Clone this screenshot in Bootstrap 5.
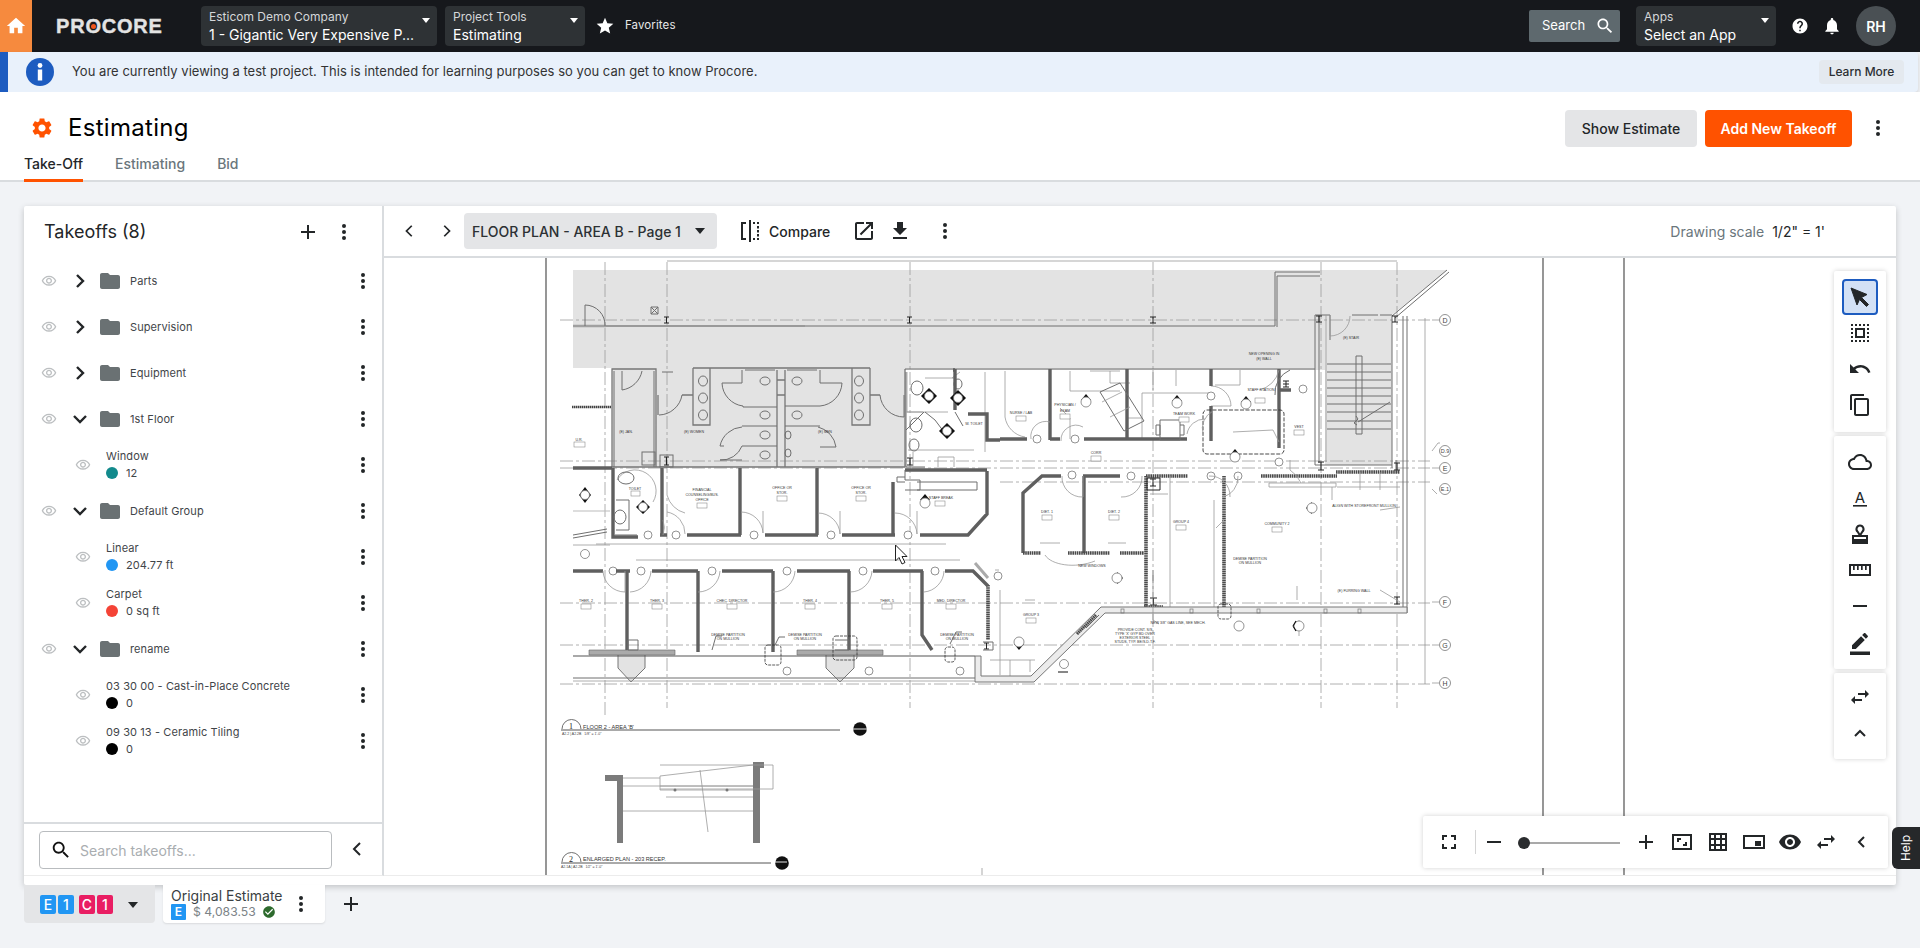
<!DOCTYPE html>
<html lang="en">
<head>
<meta charset="utf-8">
<title>Estimating</title>
<link href="https://cdn.jsdelivr.net/npm/bootstrap@5.3.0/dist/css/bootstrap.min.css" rel="stylesheet">
<style>
html,body{height:948px;overflow:hidden}
body{background:#f1f3f6;font-family:Inter,"Liberation Sans",sans-serif;color:#232628;font-size:14px;position:relative}
svg{display:block;flex:none}
.ic{width:24px;height:24px;fill:currentColor}
.sk{fill:none;stroke:currentColor;stroke-width:2}
.topbar{height:52px;background:#16181c;color:#fff}
.homebox{width:32px;height:52px;background:#f68a3e}
.logo{font:700 20px/24px "Liberation Sans",sans-serif;letter-spacing:.8px;color:#e3e3e3;-webkit-text-stroke:.4px #e3e3e3;margin:0 39px 0 24px;width:106px;white-space:nowrap}
.logo i{font-style:normal;position:relative;display:inline-block}
.logo i::after{content:"";position:absolute;left:5.5px;top:9.5px;width:5px;height:5px;border-radius:50%;background:#f0561c}
.sel{height:40px;background:#2e3235;border-radius:4px;padding:3px 8px;position:relative;line-height:1.2}
.sel .t1{font-size:12px;color:#d5d7d9;line-height:16px}
.sel .t2{font-size:14px;color:#fff;line-height:20px;white-space:nowrap}
.sel .cr{position:absolute;right:7px;top:12px;width:0;height:0;border:4px solid transparent;border-top:5px solid #fff;border-bottom:0}
.favs{font-size:12px;color:#e8e8e8;margin-left:9px}
.srch{width:91px;height:32px;background:#5e696e;border-radius:2px;color:#fff;font-size:13px;padding-left:13px;margin-right:16px}
.avat{width:40px;height:40px;border-radius:50%;background:#4a5054;color:#fff;font-size:14px;font-weight:600;margin:0 24px 0 14px}
.banner{height:40px;margin-right:2px;background:#e9f1fb;border-left:8px solid #1d5cc0;border-radius:0 4px 4px 0;box-shadow:0 2px 4px rgba(0,0,0,.14);padding:0 14px 0 18px;position:relative;color:#333;font-size:13px;letter-spacing:.03px}
.learn{width:85px;height:24px;background:#e4e9ef;border:0;border-radius:4px;font-size:12px;font-weight:500;color:#2b2f33;padding:0}
.titlesec{height:90px;background:#fff;border-bottom:2px solid #d9dcdf;position:relative}
.ttl{font-size:24px;line-height:30px;font-weight:400;margin:0;letter-spacing:.3px;color:#000}
.tab1{font-size:14px;color:#6a767c;font-weight:500;margin-right:32px;padding-bottom:6px;height:29px;display:block;text-decoration:none}
.tab1.on{color:#232628;border-bottom:3px solid #ff5200}
.bgrey{width:132px;height:37px;background:#e4e5e7;border:0;border-radius:4px;font-weight:500;font-size:14px;color:#232628;padding:0}
.borange{width:147px;height:37px;background:#ff5200;border:0;border-radius:4px;font-weight:600;font-size:14px;color:#fff;padding:0}
.shell{margin:24px 0 0 24px;width:1872px;height:679px;background:#fff;box-shadow:0 2px 6px rgba(0,0,0,.2);border-radius:2px;padding-bottom:9px}
.leftp{width:360px;border-right:2px solid #d9dcdf;border-bottom:1px solid #ececec}
.lhead{height:52px;padding:0 26px 0 20px}
.lhead h2{font-size:18px;font-weight:400;margin:0;line-height:52px}
.trow{height:46px;border:0;padding:0;background:transparent;color:#3f4549;font-size:11px;letter-spacing:.1px}
.trow .eye{color:#bcbfc1;width:16px;height:16px;fill:currentColor}
.trow .kb{width:24px;height:24px;margin-left:auto;margin-right:7px;fill:#232628}
.fd{width:20px;height:16px;fill:#6a7173}
.cv{width:16px;height:16px;fill:none;stroke:#232628;stroke-width:2.4}
.gp1{padding-left:17px}
.gp2{padding-left:51px}
.lab2{line-height:17px}
.dot{width:12px;height:12px;border-radius:50%;display:inline-block;margin-right:8px;vertical-align:-2px}
.lsearch{height:53px;border-top:2px solid #d9dcdf;padding:7px 0 0 15px}
.sbox{width:293px;height:38px;border:1px solid #b9bcbf;border-radius:4px;padding-left:10px;color:#a9adb0;font-size:14px;background:#fff}
.vbar{height:52px;border-bottom:2px solid #d9dcdf;padding-left:19px;color:#232628;flex:none}
.pagesel{width:253px;height:36px;background:#e4e5e7;border-radius:4px;padding:0 8px;position:relative;margin-left:11px;font-weight:500;white-space:nowrap;color:#2c3134}
.pagesel b{position:absolute;right:12px;top:15px;border:5px solid transparent;border-top:6px solid #232628;border-bottom:0}
.vport{height:618px;position:relative;overflow:hidden;background:#fff;border-bottom:1px solid #ececec}
.dl{fill:none;stroke:#8a8a8a;stroke-width:.7}
.dg{fill:none;stroke:#9c9c9c;stroke-width:.8;stroke-dasharray:13 3 3 3}
.w{fill:none;stroke:#5f5f5f;stroke-width:3.4}
.wd{fill:none;stroke:#4a4a4a;stroke-width:3.6;stroke-dasharray:1.6 .6}
.t{fill:none;stroke:#6f6f6f;stroke-width:1}
.tl{fill:none;stroke:#999;stroke-width:.8}
.rm{font:3.6px "Liberation Sans",sans-serif;fill:#333;text-anchor:middle}
.tg rect{fill:#fff;stroke:#777;stroke-width:.5}
.tg{fill:none}
.bub{fill:#fff;stroke:#777;stroke-width:.8}
.bt{font:7px "Liberation Sans",sans-serif;fill:#444;text-anchor:middle}
.ttx{font:5.6px "Liberation Sans",sans-serif;fill:#333}
.palwrap{position:absolute;top:13px;right:10px;width:52px}
.pal{background:#fff;border-radius:2px;box-shadow:0 0 5px rgba(0,0,0,.18);margin-bottom:4px;color:#232628;padding:8px 0}
.pi{height:36.2px;width:100%;color:#232628}
.pi.act{width:36px;height:36px;margin:0 auto;background:#d3e1f5;border:2px solid #1d5cc0;border-radius:4px}
.ztool{position:absolute;right:8px;bottom:7px;width:465px;height:52px;background:#fff;border-radius:2px;box-shadow:0 0 5px rgba(0,0,0,.18);color:#232628}
.ztool svg{position:absolute;top:14px}
.zsep{position:absolute;left:52px;top:14px;width:1px;height:24px;background:#d4d4d4}
.ztrk{position:absolute;left:101px;top:26px;width:96px;height:2px;background:#a9a9a9}
.zknob{position:absolute;left:95px;top:21px;width:12px;height:12px;border-radius:50%;background:#2a2c2e}
.helpt{position:absolute;right:0;top:827px;width:28px;height:42px;background:#26282a;border-radius:6px 0 0 6px;color:#fff;font-size:12px}
.helpt span{transform:rotate(-90deg);display:block}
.btabs{margin-left:24px;height:38px;margin-top:0}
.bt1{width:131px;background:#e4e5e7;border-radius:0 0 4px 4px;padding-left:16px;position:relative}
.chip{width:16px;height:19px;border-radius:2px;color:#fff;font-size:14px;font-weight:500;margin-right:2px;line-height:19px;text-align:center}
.cb{background:#2196f3}.cp{background:#e91e63}
.bt1 b{position:absolute;left:104px;top:17px;border:5px solid transparent;border-top:6px solid #232628;border-bottom:0}
.bt2{width:162px;margin-left:8px;background:#fff;border-radius:0 0 4px 4px;box-shadow:0 1px 2px rgba(0,0,0,.1);padding:3px 0 0 8px;line-height:1}
.bt2 .a{font-size:14px;color:#3a3f43;line-height:15px}
.sm{width:15px;height:16px;background:#2196f3;color:#fff;font-size:12px;font-weight:600;text-align:center;line-height:16px;border-radius:1px}
.amt{font-size:12.2px;color:#7c8387;margin-left:7px}
.vtxt{font-size:14px}
</style>
</head>
<body>
<svg width="0" height="0" style="position:absolute">
<defs>
<symbol id="i-kb" viewBox="0 0 24 24"><circle cx="12" cy="6" r="2"/><circle cx="12" cy="12" r="2"/><circle cx="12" cy="18" r="2"/></symbol>
<symbol id="i-eye" viewBox="0 0 24 24"><path d="M12 6c3.790 0 7.170 2.130 8.820 5.500C19.170 14.870 15.790 17 12 17s-7.170-2.130-8.820-5.500C4.830 8.130 8.210 6 12 6m0-2C7 4 2.730 7.110 1 11.500 2.730 15.890 7 19 12 19s9.270-3.110 11-7.500C21.270 7.110 17 4 12 4zm0 5c1.380 0 2.500 1.120 2.500 2.500S13.380 14 12 14s-2.500-1.120-2.500-2.500S10.620 9 12 9m0-2c-2.480 0-4.500 2.020-4.500 4.500S9.520 16 12 16s4.500-2.020 4.500-4.500S14.480 7 12 7z"/></symbol>
<symbol id="i-fd" viewBox="2 4 20 16"><path d="M10 4H4c-1.100 0-1.990.9-1.990 2L2 18c0 1.100.9 2 2 2h16c1.100 0 2-.9 2-2V8c0-1.100-.9-2-2-2h-8l-2-2z"/></symbol>
<symbol id="i-sr" viewBox="0 0 24 24"><path d="M15.500 14h-.79l-.28-.27C15.410 12.590 16 11.110 16 9.500 16 5.910 13.090 3 9.500 3S3 5.910 3 9.500 5.910 16 9.500 16c1.610 0 3.090-.59 4.230-1.570l.27.28v.79l5 4.990L20.490 19l-4.990-5zm-6 0C7.010 14 5 11.990 5 9.500S7.010 5 9.500 5 14 7.010 14 9.500 11.990 14 9.500 14z"/></symbol>
<symbol id="i-sw" viewBox="0 0 24 24"><path d="M6.990 11L3 15l3.990 4v-3H14v-2H6.990v-3zM21 9l-3.990-4v3H10v2h7.010v3L21 9z"/></symbol>
</defs>
</svg>

<nav class="topbar d-flex align-items-center">
  <div class="homebox d-flex align-items-center justify-content-center"><svg class="ic" style="width:22px;height:22px" viewBox="0 0 24 24"><path d="M10 20v-6h4v6h5v-8h3L12 3 2 12h3v8z"/></svg></div>
  <div class="logo">PR<i>O</i>CORE</div>
  <div class="sel" style="width:236px"><div class="t1">Esticom Demo Company</div><div class="t2">1 - Gigantic Very Expensive P...</div><span class="cr"></span></div>
  <div class="sel ms-2" style="width:140px"><div class="t1">Project Tools</div><div class="t2">Estimating</div><span class="cr"></span></div>
  <svg class="ic" style="width:20px;height:20px;margin-left:10px" viewBox="0 0 24 24"><path d="M12 17.270L18.180 21l-1.640-7.030L22 9.240l-7.190-.61L12 2 9.190 8.630 2 9.240l5.460 4.730L5.820 21z"/></svg>
  <span class="favs" style="margin-left:10px;letter-spacing:.1px;font-size:11.5px">Favorites</span>
  <div class="srch d-flex align-items-center ms-auto"><span>Search</span><svg class="ic" style="width:20px;height:20px;margin-left:10px"><use href="#i-sr"/></svg></div>
  <div class="sel" style="width:140px"><div class="t1">Apps</div><div class="t2">Select an App</div><span class="cr"></span></div>
  <svg class="ic" style="width:18px;height:18px;margin-left:15px" viewBox="0 0 24 24"><path d="M12 2C6.480 2 2 6.480 2 12s4.480 10 10 10 10-4.480 10-10S17.520 2 12 2zm1 17h-2v-2h2v2zm2.070-7.750l-.9.92C13.450 12.900 13 13.500 13 15h-2v-.5c0-1.100.45-2.100 1.170-2.830l1.240-1.260c.37-.36.59-.86.59-1.410 0-1.100-.9-2-2-2s-2 .9-2 2H8c0-2.210 1.790-4 4-4s4 1.790 4 4c0 .88-.36 1.680-.93 2.250z"/></svg>
  <svg class="ic" style="width:20px;height:20px;margin-left:13px" viewBox="0 0 24 24"><path d="M12 22c1.100 0 2-.9 2-2h-4c0 1.100.89 2 2 2zm6-6v-5c0-3.070-1.640-5.640-4.500-6.320V4c0-.83-.67-1.500-1.500-1.500s-1.500.67-1.500 1.500v.68C7.630 5.360 6 7.920 6 11v5l-2 2v1h16v-1l-2-2z"/></svg>
  <div class="avat d-flex align-items-center justify-content-center">RH</div>
</nav>

<div class="banner d-flex align-items-center">
  <svg width="28" height="28" viewBox="0 0 28 28"><circle cx="14" cy="14" r="14" fill="#1d5cc0"/><circle cx="14" cy="7.500" r="2.400" fill="#fff"/><rect x="11.800" y="11.500" width="4.400" height="11" fill="#fff"/></svg>
  <span class="flex-grow-1" style="margin-left:18px">You are currently viewing a test project. This is intended for learning purposes so you can get to know Procore.</span>
  <button class="btn learn" type="button">Learn More</button>
</div>

<section class="titlesec">
  <div class="d-flex align-items-center" style="padding:18px 0 0 30px;height:54px">
    <svg class="ic" style="color:#ff5200" viewBox="0 0 24 24" width="24" height="24"><path d="M19.140 12.940c.04-.3.06-.61.06-.94 0-.32-.02-.64-.07-.94l2.030-1.580c.18-.14.23-.41.12-.61l-1.920-3.320c-.12-.22-.37-.29-.59-.22l-2.390.96c-.5-.38-1.030-.7-1.620-.94l-.36-2.540c-.04-.24-.24-.41-.48-.41h-3.840c-.24 0-.43.17-.47.41l-.36 2.540c-.59.24-1.130.57-1.620.94l-2.390-.96c-.22-.08-.47 0-.59.22L2.740 8.870c-.12.21-.08.47.12.61l2.030 1.580c-.05.3-.09.63-.09.94s.02.64.07.94l-2.030 1.580c-.18.14-.23.41-.12.61l1.920 3.320c.12.22.37.29.59.22l2.390-.96c.5.38 1.030.7 1.620.94l.36 2.540c.05.24.24.41.48.41h3.840c.24 0 .44-.17.47-.41l.36-2.540c.59-.24 1.130-.56 1.620-.94l2.390.96c.22.08.47 0 .59-.22l1.920-3.320c.12-.22.07-.47-.12-.61l-2.010-1.580zM12 15.600c-1.980 0-3.600-1.620-3.600-3.600s1.620-3.600 3.600-3.600 3.600 1.620 3.600 3.600-1.620 3.600-3.600 3.600z"/></svg>
    <h1 class="ttl" style="margin-left:14px">Estimating</h1>
    <div class="d-flex align-items-center ms-auto" style="gap:8px;padding-right:30px">
      <button class="btn bgrey" type="button">Show Estimate</button>
      <button class="btn borange" type="button">Add New Takeoff</button>
      <svg class="ic" style="margin-left:6px"><use href="#i-kb"/></svg>
    </div>
  </div>
  <div class="d-flex" style="padding:7px 0 0 24px;">
    <a class="tab1 on" href="#">Take-Off</a><a class="tab1" href="#">Estimating</a><a class="tab1" href="#">Bid</a>
  </div>
</section>

<main class="shell d-flex">
  <aside class="leftp d-flex flex-column">
    <div class="lhead d-flex align-items-center">
      <h2>Takeoffs (8)</h2>
      <svg class="ic ms-auto" viewBox="0 0 24 24" style="margin-right:12px"><path d="M19 13h-6v6h-2v-6H5v-2h6V5h2v6h6v2z"/></svg>
      <svg class="ic"><use href="#i-kb"/></svg>
    </div>
    <ul class="list-group list-group-flush flex-grow-1">
      <li class="list-group-item trow gp1 d-flex align-items-center"><svg class="eye"><use href="#i-eye"/></svg><svg class="cv" style="margin:0 12px 0 15px" viewBox="0 0 16 16"><path d="M5 2l6 6-6 6"/></svg><svg class="fd"><use href="#i-fd"/></svg><span style="margin-left:10px">Parts</span><svg class="kb"><use href="#i-kb"/></svg></li>
      <li class="list-group-item trow gp1 d-flex align-items-center"><svg class="eye"><use href="#i-eye"/></svg><svg class="cv" style="margin:0 12px 0 15px" viewBox="0 0 16 16"><path d="M5 2l6 6-6 6"/></svg><svg class="fd"><use href="#i-fd"/></svg><span style="margin-left:10px">Supervision</span><svg class="kb"><use href="#i-kb"/></svg></li>
      <li class="list-group-item trow gp1 d-flex align-items-center"><svg class="eye"><use href="#i-eye"/></svg><svg class="cv" style="margin:0 12px 0 15px" viewBox="0 0 16 16"><path d="M5 2l6 6-6 6"/></svg><svg class="fd"><use href="#i-fd"/></svg><span style="margin-left:10px">Equipment</span><svg class="kb"><use href="#i-kb"/></svg></li>
      <li class="list-group-item trow gp1 d-flex align-items-center"><svg class="eye"><use href="#i-eye"/></svg><svg class="cv" style="margin:0 12px 0 15px" viewBox="0 0 16 16"><path d="M2 5l6 6 6-6"/></svg><svg class="fd"><use href="#i-fd"/></svg><span style="margin-left:10px">1st Floor</span><svg class="kb"><use href="#i-kb"/></svg></li>
      <li class="list-group-item trow gp2 d-flex align-items-center"><svg class="eye"><use href="#i-eye"/></svg><div class="lab2" style="margin-left:15px"><div>Window</div><div><span class="dot" style="background:#128a8c"></span>12</div></div><svg class="kb"><use href="#i-kb"/></svg></li>
      <li class="list-group-item trow gp1 d-flex align-items-center"><svg class="eye"><use href="#i-eye"/></svg><svg class="cv" style="margin:0 12px 0 15px" viewBox="0 0 16 16"><path d="M2 5l6 6 6-6"/></svg><svg class="fd"><use href="#i-fd"/></svg><span style="margin-left:10px">Default Group</span><svg class="kb"><use href="#i-kb"/></svg></li>
      <li class="list-group-item trow gp2 d-flex align-items-center"><svg class="eye"><use href="#i-eye"/></svg><div class="lab2" style="margin-left:15px"><div>Linear</div><div><span class="dot" style="background:#2196f3"></span>204.77 ft</div></div><svg class="kb"><use href="#i-kb"/></svg></li>
      <li class="list-group-item trow gp2 d-flex align-items-center"><svg class="eye"><use href="#i-eye"/></svg><div class="lab2" style="margin-left:15px"><div>Carpet</div><div><span class="dot" style="background:#f44336"></span>0 sq ft</div></div><svg class="kb"><use href="#i-kb"/></svg></li>
      <li class="list-group-item trow gp1 d-flex align-items-center"><svg class="eye"><use href="#i-eye"/></svg><svg class="cv" style="margin:0 12px 0 15px" viewBox="0 0 16 16"><path d="M2 5l6 6 6-6"/></svg><svg class="fd"><use href="#i-fd"/></svg><span style="margin-left:10px">rename</span><svg class="kb"><use href="#i-kb"/></svg></li>
      <li class="list-group-item trow gp2 d-flex align-items-center"><svg class="eye"><use href="#i-eye"/></svg><div class="lab2" style="margin-left:15px"><div>03 30 00 - Cast-in-Place Concrete</div><div><span class="dot" style="background:#000"></span>0</div></div><svg class="kb"><use href="#i-kb"/></svg></li>
      <li class="list-group-item trow gp2 d-flex align-items-center"><svg class="eye"><use href="#i-eye"/></svg><div class="lab2" style="margin-left:15px"><div>09 30 13 - Ceramic Tiling</div><div><span class="dot" style="background:#000"></span>0</div></div><svg class="kb"><use href="#i-kb"/></svg></li>
    </ul>
    <div class="lsearch d-flex align-items-start">
      <div class="sbox d-flex align-items-center"><svg class="ic" style="color:#111;margin-right:8px;width:22px;height:22px"><use href="#i-sr"/></svg><span>Search takeoffs...</span></div>
      <svg class="cv" style="margin:10px 0 0 18px;stroke-width:2" viewBox="0 0 16 16"><path d="M10 2L4 8l6 6"/></svg>
    </div>
  </aside>
  <section class="flex-grow-1 d-flex flex-column" style="min-width:0">
    <div class="vbar d-flex align-items-center">
      <svg class="cv" style="width:14px;height:14px;stroke-width:2" viewBox="0 0 16 16"><path d="M10 2L4 8l6 6"/></svg>
      <svg class="cv" style="width:14px;height:14px;stroke-width:2;margin-left:22px" viewBox="0 0 16 16"><path d="M6 2l6 6-6 6"/></svg>
      <div class="pagesel d-flex align-items-center">FLOOR PLAN - AREA B - Page 1<b></b></div>
      <svg class="ic" style="margin-left:21px" viewBox="0 0 24 24"><path d="M3 3h5v2H5v14h3v2H3zM11 1h2v22h-2z"/><path d="M15 3h2v2h-2zM19 3h2v2h-2zM19 7h2v2.500h-2zM19 11h2v2.500h-2zM19 15h2v2.500h-2zM19 19h2v2h-2zM15 19h2v2h-2z"/></svg>
      <span class="vtxt" style="margin-left:7px;font-weight:500">Compare</span>
      <svg class="ic" style="margin-left:22px" viewBox="0 0 24 24"><path d="M19 19H5V5h7V3H5c-1.110 0-2 .9-2 2v14c0 1.100.89 2 2 2h14c1.100 0 2-.9 2-2v-7h-2v7zM14 3v2h3.590l-9.830 9.830 1.410 1.410L19 6.410V10h2V3h-7z"/></svg>
      <svg class="ic" style="margin-left:12px" viewBox="0 0 24 24"><path d="M19 9h-4V3H9v6H5l7 7 7-7zM5 18v2h14v-2H5z"/></svg>
      <svg class="ic" style="margin-left:21px"><use href="#i-kb"/></svg>
      <div class="ms-auto" style="padding-right:71px;white-space:nowrap"><span style="color:#6a767c">Drawing scale</span><span style="margin-left:8px">1/2" = 1'</span></div>
    </div>
    <div class="vport">
      <svg width="1512" height="618" viewBox="384 258 1512 618">
        <polygon fill="#e3e3e3" points="573,270 1447,270 1392,315 1392,465 1325,465 1325,370 905,370 905,467 612,467 612,368 573,368"/>
        <path d="M546 258V876M1543 258V876M1624 258V876" stroke="#6b6b6b" stroke-width="1.400" fill="none"/>
        <path class="dl" d="M667 261H1397"/>
        <path class="dg" d="M560 320H1430M560 461H1430M560 468H1430M1000 482H1430M560 603H1430M560 645H1430M560 684H1430M605 262V716M667 262V708M910 262V708M1153 262V708M1321 262V708M1397 262V708"/>
        <path d="M1432 320h7M1432 451l6-8h2M1432 468h7M1432 489l5 5M1432 602h7M1432 645h7M1432 683h7M1425 318V684" class="dl"/>
        <g class="bub"><circle cx="1445" cy="320" r="5.500"/><circle cx="1445" cy="451" r="5.500"/><circle cx="1445" cy="468" r="5.500"/><circle cx="1445" cy="489" r="5.500"/><circle cx="1445" cy="602" r="5.500"/><circle cx="1445" cy="645" r="5.500"/><circle cx="1445" cy="683" r="5.500"/></g>
        <g class="bt"><text x="1445" y="322.500">D</text><text x="1445" y="453" style="font-size:5.500px">D.9</text><text x="1445" y="470.500">E</text><text x="1445" y="491" style="font-size:5.500px">E.1</text><text x="1445" y="604.500">F</text><text x="1445" y="647.500">G</text><text x="1445" y="685.500">H</text></g>
        <path d="M573 326H606" stroke="#a0a0a0" stroke-width="2.400"/><path d="M606 326H805" stroke="#9a9a9a" stroke-width="2"/><path d="M805 326H1275V272H1320" class="t" stroke-width="1.400"/>
        <path class="t" d="M1277 327V276H1320M585 326V305a20 20 0 0 1 20 21M651 307h7v7h-7zM651 307l7 7M658 307l-7 7"/>
        <path d="M664 317h5M666.500 317v6M664 323h5M907 317h5M909.500 317v6M907 323h5M1150 317h6M1153 317v6M1150 323h6" stroke="#222" stroke-width="1" fill="none"/>
        <path fill="none" stroke="#777" stroke-width="1.300" d="M612 467V369H656V467M658 395V415M682 395H693M693 368V425H710V368M693 368H870M870 368V395H880M852 368V425H870V395M905 369V467H612M777 370V467M785 370V467M777 380h8V395h-8"/>
        <path class="t" d="M614 371V467M654 371V467M662 372h11M622 371V390a24 24 0 0 0 20 -19M659 415a24 24 0 0 0 23-20M880 395a24 24 0 0 0 24 22V395M742 370V383H722a24 24 0 0 0 21 23V407H777M742 426h35M742 427a24 24 0 0 0 -22 19h4M742 446h35M742 446a22 22 0 0 1 -22 14h22M820 370V383H842a24 24 0 0 1 -22 23H785M785 426h35M818 427a24 24 0 0 1 18 20H820M745 370h30M787 370h30"/>
        <g class="t"><ellipse cx="703" cy="381" rx="4.500" ry="5"/><ellipse cx="703" cy="398" rx="4.500" ry="5"/><ellipse cx="703" cy="415" rx="4.500" ry="5"/><ellipse cx="859" cy="381" rx="4.500" ry="5"/><ellipse cx="859" cy="398" rx="4.500" ry="5"/><ellipse cx="859" cy="415" rx="4.500" ry="5"/><ellipse cx="765" cy="381" rx="5" ry="4"/><ellipse cx="797" cy="381" rx="5" ry="4"/><ellipse cx="765" cy="415" rx="5" ry="4"/><ellipse cx="797" cy="415" rx="5" ry="4"/><ellipse cx="765" cy="435" rx="5" ry="4"/><ellipse cx="788" cy="435" rx="3" ry="4"/><ellipse cx="765" cy="455" rx="5" ry="4"/><ellipse cx="788" cy="453" rx="3" ry="4"/><rect x="642" y="452" width="13" height="13"/><rect x="660" y="455" width="13" height="12"/></g>
        <path d="M664 457h5M666.500 457v8M664 465h5M907 458h6M910 458v7M907 465h6" stroke="#222" stroke-width="1.200" fill="none"/>
        <path class="t" stroke-width="1.300" d="M905 369H1315M906 372V467H925"/>
        <path class="tl" d="M907 372v40h16M906 412h42M925 378h30v30M960 372l-8 6M908 450h66M913 470h14M913 452v14M938 467v-10h16v10M985 372v80M1005 371v46a24 24 0 0 0 20 20M1070 371v20h50M1090 371h30M1060 408l10 10v21M1110 371v12h20M1142 393h70M1142 393V440M1142 418h-16M1153 370v20M1176 370v16M1240 370v15h-25M1211 386a20 20 0 0 1 20 20h-20"/>
        <g class="t"><ellipse cx="917" cy="388" rx="6" ry="7"/><ellipse cx="916" cy="425" rx="6" ry="7"/><ellipse cx="914" cy="445" rx="5" ry="6"/><ellipse cx="958" cy="384" rx="4" ry="5"/><path d="M925 412l10 8 9 12M955 412l8 14M906 430l18 -18"/></g>
        <path class="w" d="M955 369V410M955 370h-2M1050 369V440M1000 439H1027M1050 439h10M1127 369V439M1084 439H1187M1211 369V386M1211 406V441M1279 369V448M1279 390h12M968 414H987V440H1000"/>
        <rect x="1203" y="410" width="81" height="44" rx="4" fill="none" stroke="#333" stroke-width=".9" stroke-dasharray="4 1.500"/>
        <path class="tl" d="M1203 434a20 20 0 0 1 10 -23M1233 432l40 -2 6 12M1279 370a26 26 0 0 1 -20 20M1031 439a15 15 0 0 1 19 -17M1061 441a15 15 0 0 1 22 -14M1187 434a18 18 0 0 1 18 -15"/>
        <path class="t" d="M1160 420H1180V440H1160zM1156 425h4v10h-4zM1180 425h4v10h-4M1290 370a25 25 0 0 0 -15 25"/>
        <path class="t" d="M1100 392l20 -9 24 38 -20 10z"/>
        <path class="tl" d="M1102 402l20 -10M1110 417l20 -10"/>
        <path class="w" d="M573 468H612M613 468V537H638M662 468V536M660 535H667M687 535H741M740 468V535M765 535H818M817 468V535M842 535H895M893 482V535M920 535H968L987 514V471M905 470H987"/>
        <path d="M572 407H611" stroke="#444" stroke-width="2.400" stroke-dasharray="1.500 .5" fill="none"/>
        <path class="tl" d="M663 520a22 22 0 0 1 0 15M685 513a25 25 0 0 1 -18 -18M667 512a22 22 0 0 1 18 22M741 512a22 22 0 0 1 22 21V511M818 513a22 22 0 0 1 22 21V511M895 513a22 22 0 0 1 22 21V511M617 480a18 18 0 1 1 36 22M573 545H610M596 544H946M636 560H960"/>
        <path class="t" d="M905 470V480H920V490H905M917 482h60V490H917M905 477h-8v5H905M615 535h22"/>
        <g class="t"><ellipse cx="626" cy="478" rx="8" ry="6"/><ellipse cx="620" cy="517" rx="6" ry="7"/><path d="M616 500h13V530h-13M573 535l34 -6M573 538l34 -6"/></g>
        <path d="M573 511H610" stroke="#bbb" stroke-width="1" fill="none"/>
        <g class="bub"><circle cx="648" cy="535" r="4"/><circle cx="676" cy="535" r="4"/><circle cx="754" cy="535" r="4"/><circle cx="831" cy="535" r="4"/><circle cx="908" cy="535" r="4"/><circle cx="613" cy="571" r="4"/><circle cx="641" cy="571" r="4"/><circle cx="712" cy="571" r="4"/><circle cx="787" cy="571" r="4"/><circle cx="863" cy="571" r="4"/><circle cx="935" cy="571" r="4"/><circle cx="998" cy="576" r="4"/><circle cx="1037" cy="439" r="4"/><circle cx="1075" cy="439" r="4"/><circle cx="1211" cy="396" r="4"/><circle cx="1303" cy="389" r="4"/><circle cx="1072" cy="475" r="4"/><circle cx="1131" cy="476" r="4"/><circle cx="1211" cy="476" r="4"/><circle cx="1238" cy="476" r="4"/><circle cx="1279" cy="462" r="4"/></g>
        <g fill="#111"><path d="M921 396l8-8 8 8-8 8zM950 398l8-8 8 8-8 8zM939 431l8-8 8 8-8 8zM585 487l6 8-6 8-6-8zM636 507l7-7 7 7-7 7zM925 494l5 6h-10zM1086 394l5 6h-10zM1177 395l5 6h-10zM1246 396l5 6h-10zM1235 449l5 6h-10zM1306 508l6-6v12zM1123 578l-6-6v12zM1019 650l-5-6h10z"/></g>
        <g class="bub"><circle cx="929" cy="396" r="4.500"/><circle cx="958" cy="398" r="4.500"/><circle cx="947" cy="431" r="4.500"/><circle cx="585" cy="495" r="4.500"/><circle cx="643" cy="507" r="4.500"/><circle cx="585" cy="554" r="4.500"/><circle cx="925" cy="503" r="5"/><circle cx="1086" cy="402" r="5"/><circle cx="1177" cy="403" r="5"/><circle cx="1246" cy="404" r="5"/><circle cx="1235" cy="457" r="5"/><circle cx="1312" cy="508" r="5"/><circle cx="1117" cy="578" r="5"/><circle cx="1019" cy="642" r="5"/></g>
        <path class="w" d="M1023 553V493L1042 476H1061M1084 476V553M1083 476H1120"/>
        <path class="wd" d="M1023 553H1041M1068 553H1110M1120 553H1144M1146 476V607M1146 476H1188M1224 476V607M1261 476H1337M1336 472H1400M1144 607H1163"/>
        <path class="wd" d="M988 585V640"/>
        <path class="t" d="M1403 316V607M1407 316V613M1392 316L1447 270M1395 318L1449 272M1392 316V468M1396 460v10"/>
        <path class="t" d="M1315 315V465H1392M1319 315V463M1315 315H1330V340M1392 315H1380M1352 315H1378"/>
        <path class="tl" d="M1330 315V336a20 20 0 0 0 20 -20M1326 315V462"/>
        <path class="t" d="M1327 364H1391M1327 372H1391M1327 380H1391M1327 388H1391M1327 396H1391M1327 404H1391M1327 412H1391M1327 421H1391M1327 429H1391M1356 356h6v78h-6z"/>
        <path class="t" d="M1358 422l32 -20M1357 425l-3 -2 4 -4 -2 -3"/>
        <path d="M1283 384h6M1286 381v6M1283 381h6M1283 387h6M1318 462h6M1321 462v8M1318 470h6M1394 463h6M1394 470h6M1397 463v7M1147 478h13v12h-13zM1150 479h6M1153 479v7M1150 486h6M1316 316h6M1319 316v6M1316 322h6M1392 316h6M1395 316v6M1392 322h6M1150 598h7M1153.500 598v7M1150 605h7M1394 597h6M1397 597v7M1394 604h6M984 643h5M986.500 643v6M984 649h5" stroke="#222" stroke-width="1" fill="none"/>
        <path class="tl" d="M1269 483H1336V487H1269zM1290 470a30 30 0 0 1 11 13M1332 487V500M1337 487H1400M1360 472V490M1380 472V490M1209 476a20 20 0 0 1 21 21M1238 476a20 20 0 0 1 -16 21M1142 476a20 20 0 0 1 -21 21M1062 476a20 20 0 0 0 21 21V476"/>
        <path class="tl" d="M1170 476V607M1150 494h18M1224 520l-8 8M1290 460V470M1040 543h20M1108 543h18M1153 575v6M1214 500V607M995 570H999M1000 590V675M1010 660v16M1030 660v12M990 660H1035M1025 600H1035"/>
        <path class="tl" d="M1045 555c6 10 30 14 50 6M1380 510l20 -3M1380 590l20 12"/>
        <path fill="#ececec" stroke="#777" stroke-width="1" d="M975 682H1034L1105 613H1407V607H1101L1031 676H981V656H975Z"/>
        <path d="M1077 634L1096 615" stroke="#444" stroke-width="3" fill="none" stroke-dasharray="1.600 .5"/>
        <path d="M1086 628l13 -13" stroke="#666" stroke-width="1"/>
        <g fill="none" stroke="#777" stroke-width=".7"><rect x="1121" y="609" width="3" height="4"/><rect x="1190" y="609" width="3" height="4"/><rect x="1257" y="609" width="3" height="4"/><rect x="1324" y="609" width="3" height="4"/><rect x="1358" y="609" width="3" height="4"/></g>
        <path class="dl" d="M1153 570v50l6 4M1299 620v16M1297 600v-14"/>
        <rect x="1218" y="604" width="13" height="15" rx="3" fill="none" stroke="#333" stroke-width=".8" stroke-dasharray="3 1"/>
        <circle cx="1239" cy="626" r="5" class="bub"/><circle cx="1299" cy="626" r="5" class="bub"/><circle cx="1064" cy="664" r="4.500" class="bub"/>
        <path d="M1293 626l3-5M1293 626l3 5M1058 672h10" stroke="#111" stroke-width="1.200"/>
        <path class="w" d="M573 571H603M627 571V652M616 571H630M652 571H698M698 571V652M722 571H773M773 571V652M797 571H850M849 571V652M873 571H923M922 571V635L932 650M945 571H973L988 586"/>
        <path d="M975 563l13 15" stroke="#aaa" stroke-width="3" fill="none"/>
        <path class="tl" d="M603 571a22 22 0 0 0 22 21V571M630 592a22 22 0 0 0 21 -21M698 592a22 22 0 0 0 22 -21M773 592a22 22 0 0 0 22 -21M850 592a22 22 0 0 0 22 -21M924 592a22 22 0 0 0 20 -21"/>
        <path fill="#e3e3e3" stroke="#777" stroke-width="1" d="M618 654V668L631 682L645 668V654ZM826 654V668L840 682L854 668V654Z"/>
        <path fill="#aaa" stroke="#666" stroke-width=".6" d="M589 650H675V655H589ZM797 650H883V655H797Z"/>
        <path stroke="#555" stroke-width="1.200" fill="none" d="M573 656H975"/>
        <path class="t" stroke-width="1.800" d="M573 678H975"/>
        <path class="tl" d="M573 681H975"/>
        <rect x="765" y="645" width="16" height="20" rx="3" fill="none" stroke="#333" stroke-width=".8" stroke-dasharray="3 1"/>
        <rect x="833" y="636" width="24" height="24" rx="3" fill="none" stroke="#333" stroke-width=".8" stroke-dasharray="3 1"/>
        <rect x="945" y="647" width="10" height="15" rx="3" fill="none" stroke="#333" stroke-width=".8" stroke-dasharray="3 1"/>
        <path class="t" d="M628 640h10v10h-10zM835 640h14v10h-14M983 642h10v8h-10M712 650l4-14h6M775 645l4-8h6M950 644l6-12h6"/>
        <g class="bub"><circle cx="787" cy="671" r="4"/><circle cx="869" cy="671" r="4"/><circle cx="960" cy="671" r="4"/></g>
        <g class="tg"><rect x="574" y="442" width="11" height="5"/><rect x="631" y="491" width="9" height="5"/><rect x="697" y="503" width="10" height="5"/><rect x="777" y="496" width="10" height="5"/><rect x="856" y="496" width="10" height="5"/><rect x="935" y="501" width="10" height="5"/><rect x="1016" y="416" width="10" height="5"/><rect x="1060" y="414" width="10" height="5"/><rect x="1179" y="417" width="10" height="5"/><rect x="1255" y="398" width="10" height="5"/><rect x="1294" y="430" width="10" height="5"/><rect x="1091" y="456" width="10" height="5"/><rect x="1042" y="515" width="10" height="5"/><rect x="1109" y="515" width="10" height="5"/><rect x="1176" y="525" width="10" height="5"/><rect x="1272" y="527" width="10" height="5"/><rect x="581" y="604" width="10" height="5"/><rect x="652" y="604" width="10" height="5"/><rect x="727" y="604" width="10" height="5"/><rect x="805" y="604" width="10" height="5"/><rect x="882" y="604" width="10" height="5"/><rect x="946" y="604" width="10" height="5"/><rect x="1026" y="618" width="10" height="5"/></g>
        <g class="rm">
          <text x="626" y="433">(E) JAN.</text><text x="694" y="433">(E) WOMEN</text><text x="825" y="433">(E) MEN</text><text x="579" y="441">U.R.</text>
          <text x="635" y="490">TOILET</text><text x="702" y="491">FINANCIAL</text><text x="702" y="496">COUNSELING/BUS.</text><text x="702" y="501">OFFICE</text>
          <text x="782" y="489">OFFICE OR</text><text x="782" y="494">STOR.</text><text x="861" y="489">OFFICE OR</text><text x="861" y="494">STOR.</text><text x="941" y="499">STAFF BREAK</text>
          <text x="974" y="425">W. TOILET</text><text x="1021" y="414">NURSE / LAB</text><text x="1065" y="406">PHYSICIAN /</text><text x="1065" y="412">EXAM</text>
          <text x="1184" y="415">TEAM WORK</text><text x="1261" y="391">STAFF STATION</text><text x="1299" y="428">VEST</text><text x="1351" y="339">(E) STAIR</text>
          <text x="1096" y="454">CORR</text><text x="1047" y="513">DIET. 1</text><text x="1114" y="513">DIET. 2</text><text x="1181" y="523">GROUP 4</text><text x="1277" y="525">COMMUNITY 2</text>
          <text x="586" y="602">THER. 2</text><text x="657" y="602">THER. 3</text><text x="732" y="602">CHEC. DIRECTOR</text><text x="810" y="602">THER. 4</text><text x="887" y="602">THER. 5</text><text x="951" y="602">MED. DIRECTOR</text><text x="1031" y="616">GROUP 3</text>
          <text x="1264" y="355">NEW OPENING IN</text><text x="1264" y="360">(E) WALL</text><text x="1092" y="567">NEW WINDOWS</text><text x="1364" y="507">ALIGN WITH STOREFRONT MULLION</text><text x="1354" y="592">(E) FURRING WALL</text><text x="1250" y="560">DEMISE PARTITION</text><text x="1250" y="564">ON MULLION</text>
          <text x="728" y="636">DEMISE PARTITION</text><text x="728" y="640">ON MULLION</text><text x="805" y="636">DEMISE PARTITION</text><text x="805" y="640">ON MULLION</text><text x="957" y="636">DEMISE PARTITION</text><text x="957" y="640">ON MULLION</text>
          <text x="1178" y="624">NEW 3/8" GAS LINE, SEE MECH.</text><text x="1135" y="631">PROVIDE CONT. S/S</text><text x="1135" y="635">TYPE 'X' GYP BD OVER</text><text x="1135" y="639">EXTERIOR STEEL</text><text x="1135" y="643">STUDS, TYP. BE/S.D.T.F.</text>
        </g>
        <path d="M561 730H840" stroke="#555" stroke-width="1" fill="none"/>
        <path class="t" d="M562 729a9.500 9.500 0 0 1 19 0"/>
        <text x="571" y="729" font-size="8" font-family="Liberation Serif" text-anchor="middle" fill="#222">1</text>
        <text x="583" y="729" class="ttx">FLOOR 2 - AREA 'B'</text>
        <text x="562" y="735" font-size="3.500" font-family="Liberation Sans" fill="#444">A2.2 | A2.2B &#160; 1/8" = 1'-0"</text>
        <circle cx="860" cy="729" r="6.800" fill="#111"/><path d="M853 729h14" stroke="#fff" stroke-width=".9"/>
        <path fill="#7b7b7b" d="M605 775H623V843H617V781H605ZM753 762H764V768H760V843H753Z"/>
        <path class="tl" d="M623 778H660M623 786H753M623 811H753M660 776L753 765M660 776V790H753M660 786H753"/>
        <path d="M660 765H773V789H660M666 797H753M700 770L708 832" class="tl"/>
        <circle cx="675" cy="790" r="1.500" fill="#777"/><circle cx="727" cy="790" r="1.500" fill="#777"/>
        <path d="M561 863H771" stroke="#555" stroke-width="1" fill="none"/>
        <path class="t" d="M562 862a9.500 9.500 0 0 1 19 0"/>
        <text x="571" y="862" font-size="8" font-family="Liberation Serif" text-anchor="middle" fill="#222">2</text>
        <text x="583" y="861" class="ttx">ENLARGED PLAN - 203 RECEP.</text>
        <text x="561" y="868" font-size="3.500" font-family="Liberation Sans" fill="#444">A2.1A | A2.2B &#160; 1/2" = 1'-0"</text>
        <circle cx="782" cy="863" r="6.800" fill="#111"/><path d="M775 862h12" stroke="#fff" stroke-width=".9"/>
        <path d="M982 868v7" stroke="#888" stroke-width=".7"/>
        <path d="M895.500 545V561L899 557.500 902 564 905 562.500 902 556.500H907Z" fill="#fff" stroke="#222" stroke-width="1"/>
      </svg>
      <div class="palwrap">
        <div class="pal">
          <button class="btn p-0 pi act d-flex align-items-center justify-content-center" type="button"><svg class="ic" viewBox="0 0 24 24"><path d="M3 3L19 9.500L13.500 12.500L20.500 19.500L18.500 21.500L11.500 14.500L9 20Z" stroke="currentColor"/></svg></button>
          <div class="pi d-flex align-items-center justify-content-center"><svg class="ic" viewBox="0 0 24 24"><path d="M3 3h2v2H3zM7 3h2v2H7zM11 3h2v2h-2zM15 3h2v2h-2zM19 3h2v2h-2zM3 7h2v2H3zM19 7h2v2h-2zM3 11h2v2H3zM19 11h2v2h-2zM3 15h2v2H3zM19 15h2v2h-2zM3 19h2v2H3zM7 19h2v2H7zM11 19h2v2h-2zM15 19h2v2h-2zM19 19h2v2h-2z"/><path d="M7 7h10v10H7zm2 2v6h6V9z" fill-rule="evenodd"/></svg></div>
          <div class="pi d-flex align-items-center justify-content-center"><svg class="ic" viewBox="0 0 24 24"><path d="M12.500 8c-2.650 0-5.050.99-6.900 2.600L2 7v9h9l-3.620-3.620c1.390-1.160 3.160-1.880 5.120-1.880 3.540 0 6.550 2.310 7.600 5.500l2.370-.78C21.080 11.030 17.150 8 12.500 8z"/></svg></div>
          <div class="pi d-flex align-items-center justify-content-center"><svg class="ic" viewBox="0 0 24 24"><path d="M16 1H4c-1.100 0-2 .9-2 2v14h2V3h12V1zm3 4H8c-1.100 0-2 .9-2 2v14c0 1.100.9 2 2 2h11c1.100 0 2-.9 2-2V7c0-1.100-.9-2-2-2zm0 16H8V7h11v14z"/></svg></div>
        </div>
        <div class="pal" style="padding-top:8px">
          <div class="pi d-flex align-items-center justify-content-center"><svg class="ic" viewBox="0 0 24 24"><path d="M19.350 10.040C18.670 6.590 15.640 4 12 4 9.110 4 6.600 5.640 5.350 8.040 2.340 8.360 0 10.910 0 14c0 3.310 2.690 6 6 6h13c2.760 0 5-2.240 5-5 0-2.640-2.050-4.780-4.650-4.960zM19 18H6c-2.210 0-4-1.790-4-4 0-2.050 1.530-3.760 3.560-3.970l1.070-.11.5-.95C8.080 7.140 9.940 6 12 6c2.620 0 4.880 1.860 5.390 4.430l.3 1.500 1.530.11c1.560.1 2.780 1.410 2.780 2.960 0 1.650-1.350 3-3 3z"/></svg></div>
          <div class="pi d-flex align-items-center justify-content-center"><svg class="ic" viewBox="0 0 24 24"><text x="12" y="16.500" text-anchor="middle" font-family="Inter" font-size="15" font-weight="400">A</text><rect x="5" y="19" width="14" height="1.600"/></svg></div>
          <div class="pi d-flex align-items-center justify-content-center"><svg class="ic" viewBox="0 0 24 24"><path d="M12 2.500a4.500 4.500 0 0 0-3 7.900l1.500 2.600H4v9h16v-9h-6.500l1.500-2.600a4.500 4.500 0 0 0-3-7.900zm0 2a2.500 2.500 0 0 1 1.800 4.200L12 11.500l-1.800-2.800A2.500 2.500 0 0 1 12 4.500zM6 15h12v2H6z" fill-rule="evenodd"/></svg></div>
          <div class="pi d-flex align-items-center justify-content-center"><svg class="ic" viewBox="0 0 24 24"><path d="M1 6h22v12H1zm2 2v8h18V8zM5 8h1.700v4H5zM9 8h1.700v4H9zM13 8h1.700v4H13zM17 8h1.700v4H17z" fill-rule="evenodd"/></svg></div>
          <div class="pi d-flex align-items-center justify-content-center"><svg class="ic" viewBox="0 0 24 24"><rect x="5" y="11" width="14" height="2"/></svg></div>
          <div class="pi d-flex align-items-center justify-content-center"><svg class="ic" viewBox="0 0 24 24"><path d="M22 24H2v-3.500h20zM13.060 5.190l3.750 3.750L7.750 18H4v-3.750l9.060-9.060zm4.820 2.680-3.750-3.750 1.830-1.830c.39-.39 1.020-.39 1.410 0l2.340 2.340c.39.39.39 1.020 0 1.410l-1.830 1.830z"/></svg></div>
        </div>
        <div class="pal" style="padding-top:6px;padding-bottom:8px">
          <div class="pi d-flex align-items-center justify-content-center"><svg class="ic"><use href="#i-sw"/></svg></div>
          <div class="pi d-flex align-items-center justify-content-center"><svg class="ic sk" viewBox="0 0 24 24"><path d="M7 15l5-5 5 5"/></svg></div>
        </div>
      </div>
      <div class="ztool">
        <svg class="ic" style="left:14px" viewBox="0 0 24 24"><path d="M7 14H5v5h5v-2H7v-3zm-2-4h2V7h3V5H5v5zm12 7h-3v2h5v-5h-2v3zM14 5v2h3v3h2V5h-5z"/></svg>
        <span class="zsep"></span>
        <svg class="ic" style="left:59px" viewBox="0 0 24 24"><rect x="5" y="11" width="14" height="2"/></svg>
        <span class="ztrk"></span><span class="zknob"></span>
        <svg class="ic" style="left:211px" viewBox="0 0 24 24"><path d="M19 13h-6v6h-2v-6H5v-2h6V5h2v6h6v2z"/></svg>
        <svg class="ic" style="left:247px" viewBox="0 0 24 24"><path d="M2 4h20v16H2zm2 2v12h16V6zM7 8h4v2H9v2H7zM17 16h-4v-2h2v-2h2z" fill-rule="evenodd"/></svg>
        <svg class="ic" style="left:283px" viewBox="0 0 24 24"><path d="M3 3h18v18H3zm2 2v3h3V5zm5 0v3h4V5zm6 0v3h3V5zM5 10v4h3v-4zm5 0v4h4v-4zm6 0v4h3v-4zM5 16v3h3v-3zm5 0v3h4v-3zm6 0v3h3v-3z" fill-rule="evenodd"/></svg>
        <svg class="ic" style="left:319px" viewBox="0 0 24 24"><path d="M1 5h22v14H1zm2 2v10h18V7zM13 11h6v5h-6z" fill-rule="evenodd"/></svg>
        <svg class="ic" style="left:355px" viewBox="0 0 24 24"><path d="M12 4.500C7 4.500 2.730 7.610 1 12c1.730 4.390 6 7.500 11 7.500s9.270-3.110 11-7.500c-1.730-4.390-6-7.500-11-7.500zM12 17c-2.760 0-5-2.240-5-5s2.240-5 5-5 5 2.240 5 5-2.240 5-5 5zm0-8c-1.660 0-3 1.340-3 3s1.340 3 3 3 3-1.340 3-3-1.340-3-3-3z"/></svg>
        <svg class="ic" style="left:391px"><use href="#i-sw"/></svg>
        <svg class="ic sk" style="left:427px" viewBox="0 0 24 24"><path d="M14 7l-5 5 5 5"/></svg>
      </div>
    </div>
  </section>
</main>

<div class="btabs d-flex">
  <div class="bt1 d-flex align-items-center">
    <span class="chip cb">E</span><span class="chip cb" style="margin-right:5px">1</span><span class="chip cp">C</span><span class="chip cp">1</span><b></b>
  </div>
  <div class="bt2 d-flex">
    <div>
      <div class="a">Original Estimate</div>
      <div class="d-flex align-items-center" style="margin-top:1px"><span class="sm">E</span><span class="amt">$ 4,083.53</span><svg style="width:14px;height:14px;margin-left:6px;fill:#2d6a2d" viewBox="0 0 24 24"><path d="M12 2C6.480 2 2 6.480 2 12s4.480 10 10 10 10-4.480 10-10S17.520 2 12 2zm-2 15l-5-5 1.410-1.410L10 14.170l7.590-7.590L19 8l-9 9z"/></svg></div>
    </div>
    <svg class="ic" style="margin:4px 0 0 auto;margin-right:12px"><use href="#i-kb"/></svg>
  </div>
  <svg class="ic" style="margin:7px 0 0 14px" viewBox="0 0 24 24"><path d="M19 13h-6v6h-2v-6H5v-2h6V5h2v6h6v2z"/></svg>
</div>

<div class="helpt d-flex align-items-center justify-content-center"><span>Help</span></div>

<script src="https://cdn.jsdelivr.net/npm/bootstrap@5.3.0/dist/js/bootstrap.bundle.min.js"></script>
</body>
</html>
